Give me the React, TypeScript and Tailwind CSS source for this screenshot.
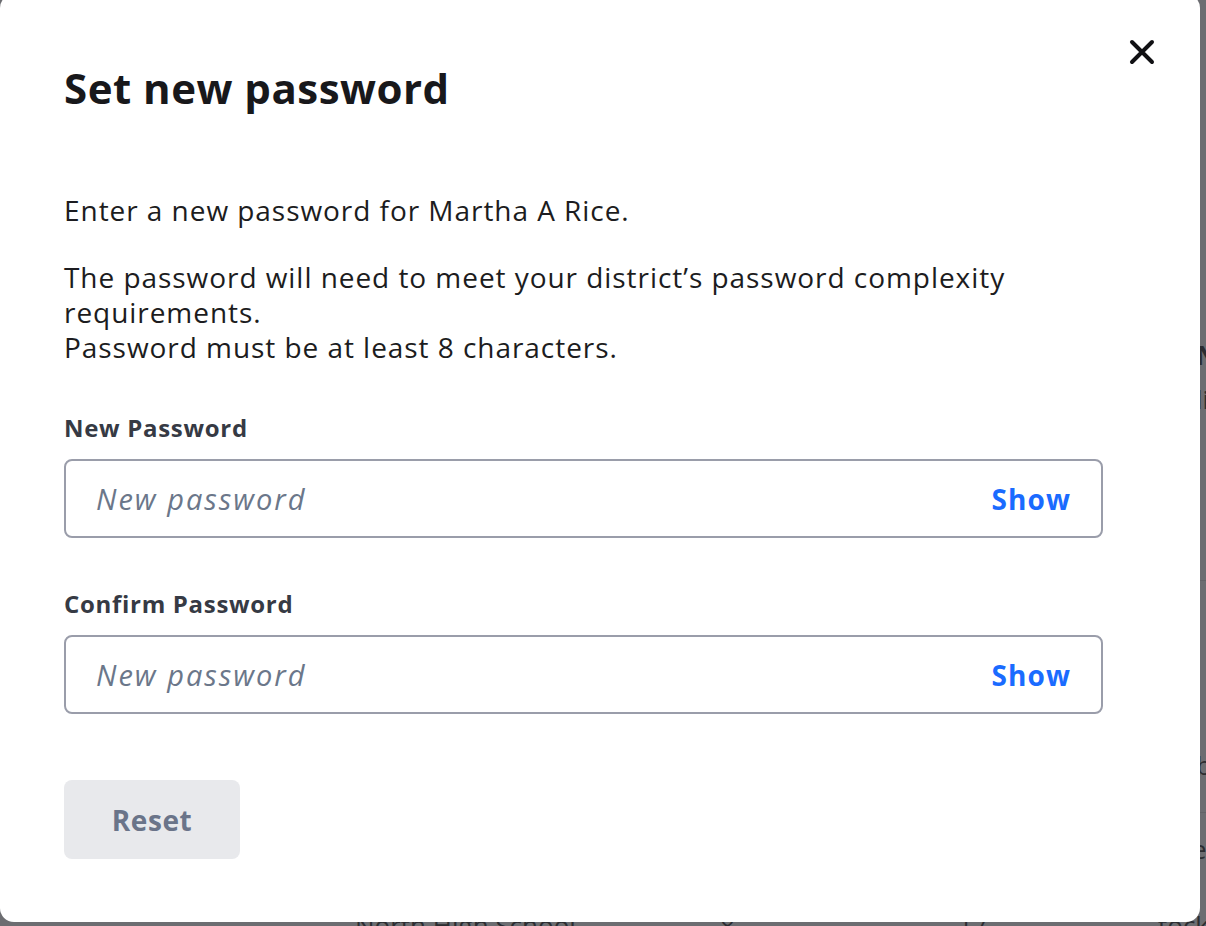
import React from "react";

export default function App() {
  const font = { fontFamily: '"Open Sans", "Lato", sans-serif' };
  return (
    <div className="relative w-[1206px] h-[926px] overflow-hidden bg-[#6c6d71]" style={font}>
      {/* background page content seen through overlay */}
      <div className="absolute inset-0 text-[#2c2d31] text-[26px]">
        <div className="absolute left-[1196px] top-[336px] font-bold">Nu</div>
        <div className="absolute left-[1196px] top-[380px]">lin</div>
        <div className="absolute left-0 right-0 top-[580px] h-px bg-[#626367]" />
        <div className="absolute left-[1196px] top-[746px]">bo</div>
        <div className="absolute left-0 right-0 top-[812px] h-px bg-[#626367]" />
        <div className="absolute left-[1192px] top-[830px]">ele</div>
        <div className="absolute left-[355px] top-[906px]">North High School</div>
        <div className="absolute left-[720px] top-[906px]">8</div>
        <div className="absolute left-[958px] top-[906px]">17</div>
        <div className="absolute left-[1158px] top-[906px]">tock</div>
      </div>

      {/* modal */}
      <div className="absolute left-0 top-[-6px] w-[1200px] h-[928px] rounded-[14px] bg-white">
        <div className="flex flex-col pl-[64px] pr-[97px] pt-[72px]">
          <div className="flex items-start justify-between">
            <h1 className="text-[42px] leading-[44px] font-bold text-[#18181b] tracking-[0.5px]">
              Set new password
            </h1>
            <button className="mr-[-54px] mt-[-29px] w-[30px] h-[30px] flex items-center justify-center">
              <svg width="26" height="26" viewBox="0 0 26 26" fill="none">
                <path d="M3 3L23 23M23 3L3 23" stroke="#111114" strokeWidth="4" strokeLinecap="round" />
              </svg>
            </button>
          </div>

          <div className="mt-[83px] text-[28px] leading-[35px] tracking-[0.95px] text-[#1c1c20]">
            <p>Enter a new password for Martha A Rice.</p>
            <p className="mt-[32px]">
              The password will need to meet your district’s password complexity
              <br />
              requirements.
              <br />
              Password must be at least 8 characters.
            </p>
          </div>

          <label className="mt-[48px] text-[24px] leading-[30px] font-bold tracking-[0.7px] text-[#363a44]">New Password</label>
          <div className="mt-[16px] h-[79px] flex items-center justify-between rounded-[8px] border-2 border-[#9a9daa] pl-[30px] pr-[30px]">
            <span className="italic text-[29px] tracking-[2px] text-[#6b778a]">New password</span>
            <span className="font-bold text-[28px] tracking-[1.1px] text-[#1a6bff]">Show</span>
          </div>

          <label className="mt-[51px] text-[24px] leading-[30px] font-bold tracking-[0.7px] text-[#363a44]">Confirm Password</label>
          <div className="mt-[16px] h-[79px] flex items-center justify-between rounded-[8px] border-2 border-[#9a9daa] pl-[30px] pr-[30px]">
            <span className="italic text-[29px] tracking-[2px] text-[#6b778a]">New password</span>
            <span className="font-bold text-[28px] tracking-[1.1px] text-[#1a6bff]">Show</span>
          </div>

          <div className="mt-[66px]">
            <button className="w-[176px] h-[79px] rounded-[8px] bg-[#e8e9ec] text-[28px] font-bold tracking-[0.6px] text-[#6a7489]">
              Reset
            </button>
          </div>
        </div>
      </div>
    </div>
  );
}
